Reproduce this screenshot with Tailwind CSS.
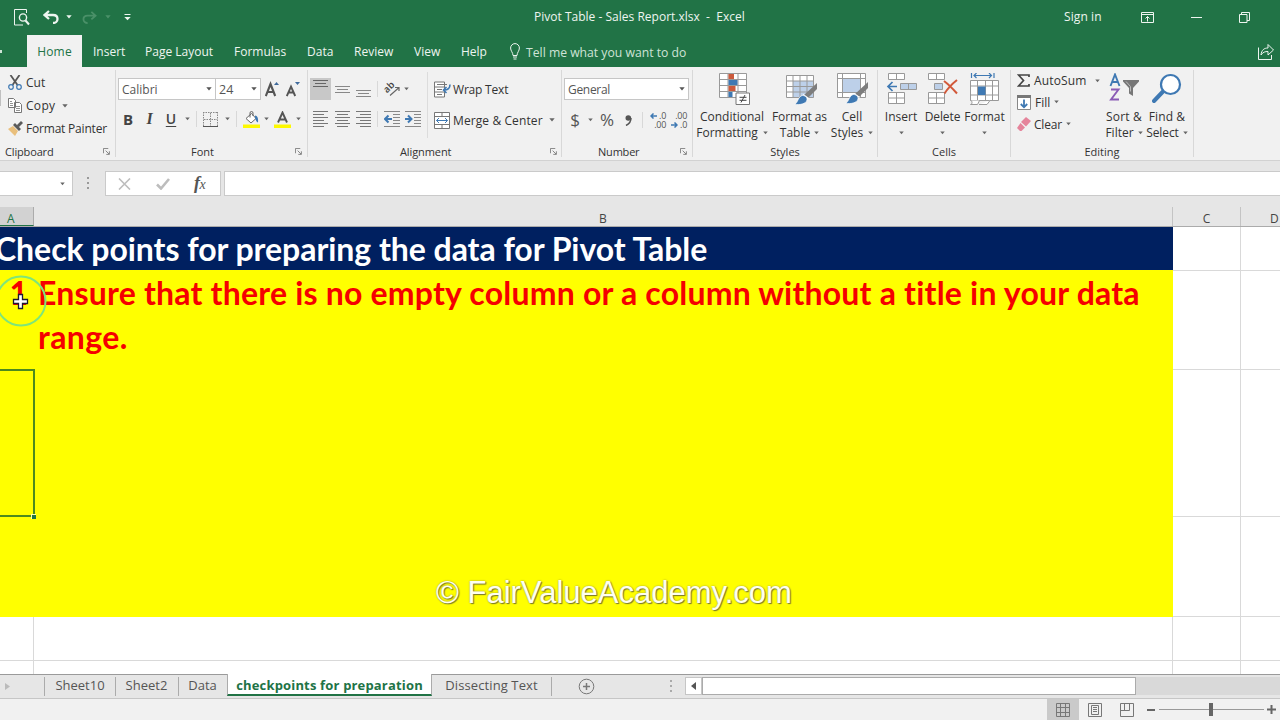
<!DOCTYPE html>
<html lang="en">
  <head>
    <meta charset="UTF-8" />
    <meta name="viewport" content="width=device-width, initial-scale=1.0" />
    <title>Pivot Table - Sales Report.xlsx - Excel</title>
    <script src="https://cdn.jsdelivr.net/npm/@tailwindcss/browser@4"></script>
  </head>
  <body class="w-[1280px] h-[720px] overflow-hidden bg-[#e6e6e6] font-['Open_Sans',sans-serif] text-[12px] leading-4 text-[#333] whitespace-nowrap">
    <!-- shared shapes -->
    <svg class="hidden">
      <symbol id="caret" viewBox="0 0 6 4"><path d="M0.3 0.3h5.4L3 3.4z" fill="currentColor" /></symbol>
      <symbol id="launcher" viewBox="0 0 8 8"><path d="M0.5 6V0.5H6M3 3l4 4M7.3 3.8v3.5H3.8" fill="none" stroke="#777" /></symbol>
      <symbol id="brush" viewBox="0 0 24 24">
        <path d="M23 1v6l-9 9-4-3z" fill="#7d7d7d" />
        <path d="M9 12.5l5.500 4" stroke="#fff" stroke-width="1.500" />
        <path d="M8.500 13.500c2.500 0 5 2 4.500 4.500C12 22 6 23 0.500 22.500 4 21 4 14 8.500 13.500z" fill="#3f79b3" stroke="#fff" stroke-width=".7" />
      </symbol>
    </svg>

    <header class="h-[67px] bg-[#217346] text-[#eef5f0]">
      <!-- Title bar -->
      <div class="flex h-[35px] items-center pb-px">
        <div class="flex w-[534px] items-center pl-[14px]">
          <svg class="w-[16px] h-[17px]" viewBox="0 0 16 17" fill="none" stroke="currentColor"><path d="M12.500 4V.5H.5v15.500H9" /><circle cx="9" cy="8.500" r="3.600" stroke-width="1.400" /><path d="M11.500 11.500l3.500 4" stroke-width="2" /></svg>
          <svg class="ml-[13px] w-[16px] h-[14px]" viewBox="0 0 16 14" fill="none" stroke="currentColor" stroke-width="2.300"><path d="M6 1L1.500 5 6 9M2 5h8c3 0 4.500 1.700 4.500 4S12.500 13 10 13" /></svg>
          <svg class="ml-[7px] w-[6px] h-[4px]"><use href="#caret" /></svg>
          <svg class="ml-[10px] w-[15px] h-[13px] text-[#4a9068]" viewBox="0 0 16 14" fill="none" stroke="currentColor" stroke-width="2"><path d="M10 1l4.500 4L10 9M14 5H6C3 5 1.500 6.700 1.500 9S3.500 13 6 13" /></svg>
          <svg class="ml-[8px] w-[6px] h-[4px] text-[#4a9068]"><use href="#caret" /></svg>
          <svg class="ml-[13px] w-[7px] h-[7px]" viewBox="0 0 7 7" fill="currentColor"><path d="M.5 0h6v1h-6zM.3 3h6.400L3.500 6.300z" /></svg>
        </div>
        <div class="w-[530px] tracking-[0.01px] whitespace-pre">Pivot Table - Sales Report.xlsx  -  Excel</div>
        <div class="w-[77px] tracking-[0.1px]">Sign in</div>
        <svg class="w-[13px] h-[11px]" viewBox="0 0 13 11" fill="none" stroke="currentColor"><path d="M.5.5h12v10H.5zM.5 2.500h12M6.500 9.500V4.500M4.500 6.500l2-2 2 2" /></svg>
        <div class="ml-[37px] h-px w-[11px] bg-[#eef5f0]"></div>
        <svg class="ml-[37px] w-[11px] h-[11px]" viewBox="0 0 11 11" fill="none" stroke="currentColor"><path d="M.5 2.500h7.500v8H.5zM2.500 2.500V.5h8v8H8" /></svg>
      </div>
      <!-- Ribbon tabs -->
      <nav class="flex h-[32px] items-center">
        <div class="w-[27px]"><span class="block h-[3px] w-[2px] bg-[#cfe3d7]"></span></div>
        <div class="flex h-[32px] w-[55px] items-center justify-center bg-[#f1f1f1] pt-[2px] tracking-[0.2px] text-[#217346]">Home</div>
        <div class="w-[63px] pt-[2px] pl-[11px]">Insert</div>
        <div class="w-[89px] pt-[2px]">Page Layout</div>
        <div class="w-[73px] pt-[2px]">Formulas</div>
        <div class="w-[47px] pt-[2px]">Data</div>
        <div class="w-[60px] pt-[2px]">Review</div>
        <div class="w-[47px] pt-[2px]">View</div>
        <div class="w-[49px] pt-[2px]">Help</div>
        <svg class="w-[10px] h-[17px]" viewBox="0 0 10 17" fill="none" stroke="currentColor"><path d="M3 12.500C3 9.500.6 8 .6 5a4.400 4.400 0 0 1 8.800 0c0 3-2.400 4.500-2.400 7.500zM3 14h4M3.500 16h3" /></svg>
        <div class="w-[737px] pt-[3px] pl-[6px] text-[12.2px] text-[#cfe3d7]">Tell me what you want to do</div>
        <svg class="w-[18px] h-[17px] shrink-0" viewBox="0 0 18 17" fill="none" stroke="currentColor"><path d="M1.500 4.500v12h13V12M4 12c.5-5 3-7 7-7V1.500L16.500 7 11 12V8.500c-3 0-5 .5-7 3.500z" /></svg>
      </nav>
    </header>

    <!-- Ribbon -->
    <section class="flex h-[94px] border-b border-[#d2d2d2] bg-[#f1f1f1] py-[3px]">
      <!-- Clipboard -->
      <div class="w-[116px] border-r border-[#d8d8d8]">
        <div class="flex h-[74px]">
          <div class="mt-[20px] h-[16px] w-px bg-[#c0c0c0]"></div>
          <div class="flex flex-col pt-[1px] pl-[7px]">
            <div class="flex h-[23px] items-center gap-[4px]">
              <svg class="w-[14px] h-[15px]" viewBox="0 0 14 15" fill="none"><path d="M2.500 0l7 10M11.500 0l-7 10" stroke="#555" stroke-width="1.800" /><circle cx="3" cy="12" r="2.300" stroke="#3f79b3" stroke-width="1.200" /><circle cx="11" cy="12" r="2.300" stroke="#3f79b3" stroke-width="1.200" /></svg>
              <span>Cut</span>
            </div>
            <div class="flex h-[23px] items-center gap-[4px]">
              <svg class="w-[14px] h-[15px]" viewBox="0 0 14 15" fill="#fff" stroke="#777"><path d="M.5.5h5l2 2v7h-7zM6.500 4.500h5l2 2v8h-7z" /><path d="M2 3.500h2M2 5.500h3M2 7.500h3M8 8.500h4M8 10.500h4M8 12.500h4" stroke-width=".8" /></svg>
              <span class="tracking-[0.3px]">Copy</span>
              <svg class="ml-[3px] w-[6px] h-[4px] text-[#666]"><use href="#caret" /></svg>
            </div>
            <div class="flex h-[23px] items-center gap-[2px]">
              <svg class="w-[16px] h-[15px]" viewBox="0 0 16 15"><path d="M0 8l5-3 5 5-3 5z" fill="#e9bf7c" /><path d="M5 4l2-2 6 6-2 2zM9 4l4-4 2 2-4 4z" fill="#5a5a5a" /></svg>
              <span class="tracking-[-0.2px]">Format Painter</span>
            </div>
          </div>
        </div>
        <div class="flex h-[15px] items-center justify-between pr-[5px] pl-[5px] text-[11px] tracking-[-0.15px]"><span>Clipboard</span><svg class="w-[7px] h-[7px]"><use href="#launcher" /></svg></div>
      </div>

      <!-- Font -->
      <div class="w-[192px] border-r border-[#d8d8d8]">
        <div class="h-[74px] pt-[8px]">
          <div class="flex h-[22px] items-center pl-[2px]">
            <div class="flex h-[22px] w-[98px] items-center justify-between border border-[#c6c6c6] bg-white px-[3px] text-[#555]"><span class="pt-[2px]">Calibri</span><svg class="w-[6px] h-[4px]"><use href="#caret" /></svg></div>
            <div class="-ml-px flex h-[22px] w-[46px] items-center justify-between border border-[#c6c6c6] bg-white px-[3px] text-[#555]"><span class="pt-[2px] text-[12.5px]">24</span><svg class="w-[6px] h-[4px]"><use href="#caret" /></svg></div>
            <svg class="ml-[4px] w-[15px] h-[16px]" viewBox="0 0 15 16"><path d="M.8 15L5.500 3 10.200 15M2.500 11h6" fill="none" stroke="#555" stroke-width="2.100" /><path d="M9 4l2.500-3L14 4z" fill="#3f6a9c" /></svg>
            <svg class="ml-[6px] w-[15px] h-[16px]" viewBox="0 0 15 16"><path d="M.8 15L5 5.500 9.200 15M2.500 11.500h5" fill="none" stroke="#555" stroke-width="1.900" /><path d="M9 1l2.500 3L14 1z" fill="#3f6a9c" /></svg>
          </div>
          <div class="mt-[9px] flex h-[20px] items-center text-[#444]">
            <div class="w-[23px] pl-[7px] text-[15px] font-bold">B</div>
            <div class="w-[21px] text-center font-['Liberation_Serif',serif] text-[16px] font-bold italic">I</div>
            <div class="w-[22px] text-center text-[14px] font-semibold underline underline-offset-2">U</div>
            <svg class="ml-[3px] w-[5px] h-[4px] text-[#666]"><use href="#caret" /></svg>
            <div class="ml-[6px] h-[16px] w-px bg-[#d8d8d8]"></div>
            <svg class="ml-[6px] w-[15px] h-[15px]" viewBox="0 0 15 15" fill="none" stroke="#888"><path d="M0 .5h15M.5 0v14M14.500 0v14M7.500 1v13M1 7.500h13" stroke-dasharray="1.500 1" /><path d="M0 14.500h15" stroke="#555" /></svg>
            <svg class="ml-[7px] w-[5px] h-[4px] text-[#666]"><use href="#caret" /></svg>
            <div class="ml-[6px] h-[16px] w-px bg-[#d8d8d8]"></div>
            <svg class="ml-[6px] w-[17px] h-[17px]" viewBox="0 0 17 17"><path d="M0 13.500h17V17H0z" fill="#fdf900" /><path d="M3 7.500L8.500 2.500 13 7.500 8 12z" fill="#fff" stroke="#666" /><path d="M7 6.500V2a1.500 1.500 0 0 1 3 0v3" fill="none" stroke="#666" /><path d="M12 4.500c2.500 0 3.500 3 3 7-2-.5-2-3-3-4.500z" fill="#3f79b3" /></svg>
            <svg class="ml-[4px] w-[5px] h-[4px] text-[#666]"><use href="#caret" /></svg>
            <svg class="ml-[5px] w-[17px] h-[17px]" viewBox="0 0 17 17"><path d="M0 13.500h17V17H0z" fill="#fdf900" /><path d="M4 11.500L8.500 1.500 13 11.500M5.500 8.500h6" fill="none" stroke="#555" stroke-width="1.900" /></svg>
            <svg class="ml-[5px] w-[5px] h-[4px] text-[#666]"><use href="#caret" /></svg>
          </div>
        </div>
        <div class="flex h-[15px] items-center justify-between pr-[5px] pl-[75px] text-[11px]"><span>Font</span><svg class="w-[7px] h-[7px]"><use href="#launcher" /></svg></div>
      </div>

      <!-- Alignment -->
      <div class="w-[254px] border-r border-[#d8d8d8]">
        <div class="flex h-[74px]">
          <div class="mt-[2px] h-[66px] w-[120px] border-r border-[#dcdcdc] pt-[6px] pl-[2px]">
            <div class="flex h-[22px] items-center">
              <div class="flex h-[22px] w-[21px] justify-center bg-[#c8c8c8]"><svg class="w-[15px] h-[10px]" viewBox="0 0 15 10" stroke="#666"><path d="M0 2.500h15M2 5.500h11M0 8.500h15" /></svg></div>
              <svg class="ml-[4px] w-[15px] h-[9px]" viewBox="0 0 15 9" stroke="#888"><path d="M0 1.500h15M2 4.500h11M0 7.500h15" /></svg>
              <svg class="mt-[8px] ml-[6px] w-[15px] h-[9px]" viewBox="0 0 15 9" stroke="#888"><path d="M0 1.500h15M2 4.500h11M0 7.500h15" /></svg>
              <div class="ml-[6px] h-[16px] w-px bg-[#d8d8d8]"></div>
              <svg class="ml-[7px] w-[15px] h-[14px] overflow-visible" viewBox="0 0 15 14"><text x="1" y="11" transform="rotate(-45 2 10)" font-size="9.500" fill="#444" font-weight="600">ab</text><path d="M5 13.500L13.500 6M10 5.500h4V9" fill="none" stroke="#666" stroke-width="1.200" /></svg>
              <svg class="ml-[4px] w-[5px] h-[4px] text-[#666]"><use href="#caret" /></svg>
            </div>
            <div class="mt-[10px] flex h-[18px] items-center pl-[3px]">
              <svg class="w-[15px] h-[16px]" viewBox="0 0 15 16" stroke="#777"><path d="M0 .5h15M0 3.500h11M0 6.500h15M0 9.500h11M0 12.500h15M0 15.500h11" /></svg>
              <svg class="ml-[7px] w-[15px] h-[16px]" viewBox="0 0 15 16" stroke="#777"><path d="M0 .5h15M2 3.500h11M0 6.500h15M2 9.500h11M0 12.500h15M2 15.500h11" /></svg>
              <svg class="ml-[6px] w-[15px] h-[16px]" viewBox="0 0 15 16" stroke="#777"><path d="M0 .5h15M4 3.500h11M0 6.500h15M4 9.500h11M0 12.500h15M4 15.500h11" /></svg>
              <div class="ml-[6px] h-[16px] w-px bg-[#d8d8d8]"></div>
              <svg class="ml-[6px] w-[16px] h-[16px]" viewBox="0 0 16 16" fill="none" stroke="#888"><path d="M0 .5h16M9 3.500h7M9 6.500h7M9 9.500h7M9 12.500h7M0 15.500h16" /><path d="M8 8H1M4.500 4.500L1 8l3.500 3.500" stroke="#3f79b3" stroke-width="2" /></svg>
              <svg class="ml-[5px] w-[16px] h-[16px]" viewBox="0 0 16 16" fill="none" stroke="#888"><path d="M0 .5h16M9 3.500h7M9 6.500h7M9 9.500h7M9 12.500h7M0 15.500h16" /><path d="M0 8h6M3 4.500L6.500 8 3 11.500" stroke="#3f79b3" stroke-width="2" /></svg>
            </div>
          </div>
          <div class="pt-[8px] pl-[6px]">
            <div class="flex h-[22px] items-center gap-[2px]">
              <svg class="w-[17px] h-[17px]" viewBox="0 0 17 17" fill="#fff" stroke="#777"><path d="M.5 1h10v15H.5zM.5 6h10M.5 11h10" /><path d="M3 3.500h10M3 8.500h5M3 13.500h5" /><path d="M16 3.500c0 4-2 5.500-6 5.500M12.500 6l-3 3 3 3" fill="none" stroke="#3f79b3" stroke-width="1.600" /></svg>
              <span class="pt-[2px] tracking-[-0.2px]">Wrap Text</span>
            </div>
            <div class="mt-[9px] flex h-[22px] items-center gap-[3px]">
              <svg class="w-[16px] h-[17px]" viewBox="0 0 16 17" fill="#fff" stroke="#777"><path d="M.5.5h15v16H.5zM.5 4.500h15M.5 12.500h15M8 .5v4M8 12.500v4" /><path d="M2.500 8.500h11M5 6L2.500 8.500 5 11M11 6l2.500 2.500L11 11" fill="none" stroke="#3f79b3" /></svg>
              <span class="pt-[2px] tracking-[0.1px]">Merge &amp; Center</span>
              <svg class="ml-[3px] w-[6px] h-[4px] text-[#666]"><use href="#caret" /></svg>
            </div>
          </div>
        </div>
        <div class="flex h-[15px] items-center justify-between pr-[4px] pl-[92px] text-[11px]"><span class="tracking-[-0.1px]">Alignment</span><svg class="w-[7px] h-[7px]"><use href="#launcher" /></svg></div>
      </div>

      <!-- Number -->
      <div class="w-[131px] border-r border-[#d8d8d8]">
        <div class="h-[74px] pt-[8px] pl-[2px]">
          <div class="flex h-[22px] w-[125px] items-center justify-between border border-[#c6c6c6] bg-white px-[3px] text-[#555]"><span class="pt-[2px] tracking-[-0.3px]">General</span><svg class="w-[6px] h-[4px]"><use href="#caret" /></svg></div>
          <div class="mt-[10px] flex h-[20px] items-center text-[#555]">
            <div class="w-[22px] text-center text-[17px]">$</div>
            <svg class="ml-[2px] w-[5px] h-[4px] text-[#666]"><use href="#caret" /></svg>
            <div class="ml-[4px] w-[20px] text-center text-[17px]">%</div>
            <svg class="ml-[8px] w-[7px] h-[11px]" viewBox="0 0 7 11"><circle cx="3.300" cy="3" r="2.800" fill="#555" /><path d="M6 3c0 4-2 6-5 7.500" fill="none" stroke="#555" stroke-width="1.500" /></svg>
            <div class="ml-[10px] h-[16px] w-px bg-[#d8d8d8]"></div>
            <div class="ml-[7px] w-[16px] text-right text-[9px] leading-[9px] tracking-[-0.3px]">
              <div class="flex items-center justify-between"><svg class="w-[7px] h-[6px]" viewBox="0 0 7 6"><path d="M7 3H1M3.500.5L1 3l2.500 2.500" fill="none" stroke="#3f79b3" stroke-width="1.500" /></svg>.0</div>
              <div>.00</div>
            </div>
            <div class="ml-[5px] w-[16px] text-right text-[9px] leading-[9px] tracking-[-0.3px]">
              <div>.00</div>
              <div class="flex items-center justify-between"><svg class="w-[7px] h-[6px]" viewBox="0 0 7 6"><path d="M0 3h6M3.500.5L6 3 3.500 5.500" fill="none" stroke="#3f79b3" stroke-width="1.500" /></svg>.0</div>
            </div>
          </div>
        </div>
        <div class="flex h-[15px] items-center justify-between pr-[5px] pl-[36px] text-[11px]"><span class="tracking-[-0.2px]">Number</span><svg class="w-[7px] h-[7px]"><use href="#launcher" /></svg></div>
      </div>

      <!-- Styles -->
      <div class="w-[185px] border-r border-[#d8d8d8]">
        <div class="flex h-[74px] pt-[3px] text-center">
          <div class="flex w-[78px] flex-col items-center">
            <svg class="mb-px h-[35px] w-[32px] translate-x-[3px]" viewBox="0 0 32 35"><path d="M.5.5h27v24H.5z" fill="#fff" /><path d="M.5.5h27v24H.5zM.5 6.500h27M.5 12.500h27M.5 18.500h27M9 .5v24M19 .5v24" fill="none" stroke="#999" /><path d="M9.500 1h5.500v5H9.500zM9.500 13h7v5h-7z" fill="#cc5a3c" /><path d="M9.500 7h9v5h-9zM9.500 19h4v5h-4z" fill="#3f79b3" /><path d="M17 20h13.500v11.500H17z" fill="#fff" stroke="#777" /><path d="M20.500 24.300h7M20.500 27.300h7M26 22l-4 7.500" stroke="#444" /></svg>
            <span>Conditional</span>
            <span class="flex items-center gap-[5px]">Formatting<svg class="w-[5px] h-[4px] text-[#666]"><use href="#caret" /></svg></span>
          </div>
          <div class="flex w-[57px] flex-col items-center">
            <svg class="mb-px h-[35px] w-[32px] translate-x-[2px]" viewBox="0 0 32 35"><path d="M.5 2.500h27v22H.5z" fill="#fff" /><path d="M7 8h20.500v16.500H7z" fill="#bdd0e9" /><path d="M.5 2.500h27v22H.5zM.5 8h27M.5 13.500h27M.5 19h27M7 2.500v22M14 2.500v22M21 2.500v22" fill="none" stroke="#999" /><use href="#brush" x="8" y="9" width="24" height="24" /></svg>
            <span class="tracking-[-0.1px]">Format as</span>
            <span class="flex items-center gap-[4px]">Table<svg class="w-[5px] h-[4px] text-[#666]"><use href="#caret" /></svg></span>
          </div>
          <div class="flex w-[48px] flex-col items-center">
            <svg class="mb-px h-[35px] w-[32px] translate-x-[1px]" viewBox="0 0 32 35"><path d="M.5.5h28v24H.5z" fill="#fff" stroke="#999" /><path d="M6 6h17v13H6z" fill="#bdd0e9" /><path d="M.5 5.500h28M.5 19.500h28M5.500.5v24M23.500.5v24" fill="none" stroke="#999" /><use href="#brush" x="8" y="8" width="24" height="24" /></svg>
            <span>Cell</span>
            <span class="flex items-center gap-[5px]">Styles<svg class="w-[5px] h-[4px] text-[#666]"><use href="#caret" /></svg></span>
          </div>
        </div>
        <div class="h-[15px] text-center text-[11px]">Styles</div>
      </div>

      <!-- Cells -->
      <div class="w-[133px] border-r border-[#d8d8d8]">
        <div class="flex h-[74px] pt-[3px] pl-[2px] text-center">
          <div class="flex w-[42px] flex-col items-center">
            <svg class="mb-px h-[35px] w-[31px]" viewBox="0 0 31 35" fill="#fff" stroke="#999"><path d="M2.500.5h16v6h-16zM10.500.5v6M2.500 19.500h16v11h-16zM2.500 25h16M10.500 19.500v11" /><path d="M14.500 10.500h16v6h-16zM22.500 10.500v6" fill="#bdd0e9" /><path d="M11 13.500H2M6.500 9L2 13.500 6.500 18" fill="none" stroke="#3f79b3" stroke-width="1.700" /></svg>
            <span>Insert</span>
            <svg class="mt-[6px] w-[5px] h-[4px] text-[#666]"><use href="#caret" /></svg>
          </div>
          <div class="flex w-[41px] flex-col items-center">
            <svg class="mb-px h-[35px] w-[31px]" viewBox="0 0 31 35" fill="#fff" stroke="#999"><path d="M1.500.5h16v6h-16zM9.500.5v6M1.500 19.500h16v11h-16zM1.500 25h16M9.500 19.500v11" /><path d="M7.500 10.500h8v6h-8z" fill="#bdd0e9" /><path d="M17 8c4 3 9 8 13 12.500M30 7c-5 4-9 8-12.500 13.500" fill="none" stroke="#d2593a" stroke-width="2" /></svg>
            <span class="tracking-[-0.1px]">Delete</span>
            <svg class="mt-[6px] w-[5px] h-[4px] text-[#666]"><use href="#caret" /></svg>
          </div>
          <div class="flex w-[43px] flex-col items-center">
            <svg class="mb-px h-[35px] w-[30px]" viewBox="0 0 30 35" fill="#fff" stroke="#999"><path d="M.5 7.500h28v20H.5z" /><path d="M.5 13h28M.5 22h28M7.500 7.500v20M15.500 7.500v20M22.500 7.500v20" /><path d="M.5 27.500c2 0 2 4 0 4h7l2-4M9 31.500h8l3-4" /><path d="M8 13.500h7.500v8.500H8z" fill="#3f79b3" stroke="none" /><path d="M1.500 0v5M24 0v5M4 2.500h17.500M6.500 0L4 2.500 6.500 5M19 0l2.500 2.500L19 5" fill="none" stroke="#3f79b3" stroke-width="1.200" /></svg>
            <span>Format</span>
            <svg class="mt-[6px] w-[5px] h-[4px] text-[#666]"><use href="#caret" /></svg>
          </div>
        </div>
        <div class="h-[15px] text-center text-[11px]">Cells</div>
      </div>

      <!-- Editing -->
      <div class="w-[183px] border-r border-[#d8d8d8]">
        <div class="flex h-[74px] pl-[6px]">
          <div class="w-[84px]">
            <div class="flex h-[21px] items-center gap-[4px]">
              <svg class="w-[13px] h-[13px]" viewBox="0 0 13 13"><path d="M12 3V1H1.500l5 5.500-5 5.500H12v-2" fill="none" stroke="#444" stroke-width="1.700" /></svg>
              <span class="tracking-[0.15px]">AutoSum</span>
              <svg class="ml-[4px] w-[5px] h-[4px] text-[#666]"><use href="#caret" /></svg>
            </div>
            <div class="flex h-[22px] items-center gap-[4px]">
              <svg class="w-[14px] h-[15px]" viewBox="0 0 14 15"><path d="M.5.5h13v14H.5z" fill="#fff" stroke="#888" /><path d="M0 0h14v3H0z" fill="#777" /><path d="M7 4.500v8M3.800 9L7 12.300 10.200 9" fill="none" stroke="#3f79b3" stroke-width="1.800" /></svg>
              <span class="pt-px">Fill</span>
              <svg class="w-[5px] h-[4px] text-[#666]"><use href="#caret" /></svg>
            </div>
            <div class="flex h-[22px] items-center gap-[3px]">
              <svg class="w-[14px] h-[14px]" viewBox="0 0 14 14"><path d="M9 0l5 4-5 5.500-5-4.500z" fill="#e5849b" /><path d="M3.500 6l4.500 4.500-3.500 3.500H3L0 11z" fill="#e5849b" /></svg>
              <span class="pt-[2px] tracking-[-0.2px]">Clear</span>
              <svg class="ml-[1px] w-[5px] h-[4px] text-[#666]"><use href="#caret" /></svg>
            </div>
          </div>
          <div class="flex w-[46px] flex-col items-center pt-[3px]">
            <svg class="mb-px h-[35px] w-[30px]" viewBox="0 0 30 35" fill="none" stroke-width="1.900"><path d="M1.500 13L6 1.500 10.500 13M3 9h6" stroke="#3f79b3" /><path d="M2 16.500h7.500L2 26.500h8" stroke="#8a5bb5" /><path d="M14 7h16v1.500l-6 6.500v8l-4-2.500V15l-6-6.500z" fill="#777" /><path d="M17 8.500l4.500 5v5" stroke="#bbb" stroke-width="1" /></svg>
            <span class="tracking-[0.2px]">Sort &amp;</span>
            <span class="flex items-center gap-[4px]">Filter<svg class="w-[5px] h-[4px] text-[#666]"><use href="#caret" /></svg></span>
          </div>
          <div class="flex w-[40px] flex-col items-center pt-[3px]">
            <svg class="mb-px h-[35px] w-[30px]" viewBox="0 0 30 35"><path d="M11.500 18L2 28" stroke="#3f79b3" stroke-width="4" stroke-linecap="round" /><circle cx="18.500" cy="11.500" r="9.500" fill="#fff" stroke="#3f79b3" stroke-width="2.200" /></svg>
            <span class="tracking-[0.1px]">Find &amp;</span>
            <span class="flex items-center gap-[4px] tracking-[-0.1px]">Select<svg class="w-[5px] h-[4px] text-[#666]"><use href="#caret" /></svg></span>
          </div>
        </div>
        <div class="h-[15px] text-center text-[11px]">Editing</div>
      </div>
    </section>

    <!-- Formula bar -->
    <section class="flex h-[46px] items-start pt-[10px]">
      <div class="flex h-[25px] w-[73px] items-center justify-end border border-l-0 border-[#cacaca] bg-white pr-[7px] text-[#666]"><svg class="w-[5px] h-[4px]"><use href="#caret" /></svg></div>
      <svg class="mt-[6px] ml-[14px] w-[3px] h-[12px]" viewBox="0 0 3 12" fill="#999"><path d="M0 0h2v2H0zM0 5h2v2H0zM0 10h2v2H0z" /></svg>
      <div class="ml-[15px] flex h-[25px] w-[116px] items-center border border-[#cacaca] bg-white">
        <svg class="ml-[12px] w-[13px] h-[12px]" viewBox="0 0 13 12" stroke="#bdbdbd" stroke-width="1.600"><path d="M1 .5l11 11M12 .5L1 11.500" /></svg>
        <svg class="ml-[25px] w-[14px] h-[12px]" viewBox="0 0 14 12" fill="none" stroke="#bdbdbd" stroke-width="2.600"><path d="M1 6.500l4 4L13 1" /></svg>
        <div class="ml-[24px] font-['Liberation_Serif',serif] text-[18px] leading-4 font-bold tracking-[-0.5px] text-[#555] italic">f<span class="text-[14px] font-normal">x</span></div>
      </div>
      <div class="ml-[3px] h-[25px] flex-1 border border-r-0 border-[#cacaca] bg-white"></div>
    </section>

    <!-- Column letters -->
    <div class="flex h-[20px] border-b border-[#ababab] leading-[23px] text-[#444]">
      <div class="w-[34px] border-r border-b border-r-[#ababab] border-b-[#217346] bg-[#d2d2d2] pl-[7px] text-[#217346]">A</div>
      <div class="w-[1139px] border-r border-[#c4c4c4] text-center">B</div>
      <div class="w-[68px] border-r border-[#c4c4c4] text-center">C</div>
      <div class="pl-[29px]">D</div>
    </div>

    <!-- Cells -->
    <main class="relative grid h-[447px] grid-cols-[34px_1139px_68px_39px] grid-rows-[43px_100px_147px_100px_44px_13px] overflow-hidden bg-white font-[Lato,sans-serif] text-[32px] leading-[44px] font-bold text-[#f50000]">
      <div class="col-span-2 bg-[#002060] text-white"><span class="-ml-[5px] inline-block tracking-[-0.05px]">Check points for preparing the data for Pivot Table</span></div>
      <div class="-mb-px border-r border-b border-[#d9d9d9]"></div>
      <div class="-mb-px border-b border-[#d9d9d9]"></div>

      <div class="bg-[#ffff00] pt-[1px] pr-[6px] text-right">1</div>
      <div class="bg-[#ffff00] pt-[1px] pl-[4px] tracking-[0.2px]">
        <div>Ensure that there is no empty column or a column without a title in your data</div>
        <div class="tracking-[0.4px]">range.</div>
      </div>
      <div class="border-r border-b border-[#d9d9d9]"></div>
      <div class="border-b border-[#d9d9d9]"></div>

      <!-- selected cell with its fill handle -->
      <div class="relative bg-[#ffff00]">
        <div class="absolute -top-[1px] right-[-1px] bottom-0 left-[-3px] border-2 border-[#4d8a1e]"></div>
        <div class="absolute right-[-2px] -bottom-[2px] h-[5px] w-[5px] border-t border-l border-[#ffffb0] bg-[#217346]"></div>
      </div>
      <div class="bg-[#ffff00]"></div>
      <div class="border-r border-b border-[#d9d9d9]"></div>
      <div class="border-b border-[#d9d9d9]"></div>

      <div class="col-span-2 bg-[#ffff00]"></div>
      <div class="border-r border-b border-[#d9d9d9]"></div>
      <div class="border-b border-[#d9d9d9]"></div>

      <div class="border-r border-b border-[#d9d9d9]"></div>
      <div class="border-r border-b border-[#d9d9d9]"></div>
      <div class="border-r border-b border-[#d9d9d9]"></div>
      <div class="border-b border-[#d9d9d9]"></div>

      <div class="border-r border-[#d9d9d9]"></div>
      <div class="border-r border-[#d9d9d9]"></div>
      <div class="border-r border-[#d9d9d9]"></div>
      <div></div>

      <!-- mouse pointer and its highlight ring -->
      <svg class="absolute -left-[5px] top-[48px] h-[52px] w-[52px]" viewBox="0 0 52 52"><circle cx="26" cy="26" r="24.500" fill="none" stroke="#7fe57a" stroke-width="2" /><path d="M23.500 19.500h4v5h5v4h-5v5h-4v-5h-5v-4h5z" fill="#fff" stroke="#1a1a33" stroke-width="1.300" /></svg>
      <div class="absolute top-[344px] left-[436px] font-['Liberation_Sans',sans-serif] text-[31px] font-normal text-[#fffff0] [text-shadow:1px_1px_1px_#77772a,0_0_2px_#99993a]">© FairValueAcademy.com</div>
    </main>

    <!-- Sheet tabs -->
    <section class="flex h-[25px] border-t border-b border-t-[#9a9a9a] border-b-[#c6c6c6] text-[13px] leading-[21px] text-[#555]">
      <div class="w-[44px] pt-[8px] pl-[5px]"><svg class="w-[5px] h-[7px]" viewBox="0 0 5 7"><path d="M0 0l5 3.500L0 7z" fill="#bbb" /></svg></div>
      <div class="my-[2px] w-[71px] border-l border-[#ababab] text-center leading-[17px]">Sheet10</div>
      <div class="my-[2px] w-[63px] border-l border-[#ababab] pr-px text-center leading-[17px]">Sheet2</div>
      <div class="my-[2px] w-[49px] border-l border-[#ababab] pr-px text-center leading-[17px]">Data</div>
      <div class="-mt-px h-[22px] w-[205px] border-r border-b-2 border-l border-r-[#ababab] border-b-[#217346] border-l-[#ababab] bg-white text-center leading-[22px] font-bold tracking-[0.17px] text-[#217346]">checkpoints for preparation</div>
      <div class="my-[2px] w-[120px] border-r border-[#ababab] text-center leading-[17px] tracking-[0.1px]">Dissecting Text</div>
      <svg class="mt-[3px] ml-[26px] w-[17px] h-[17px]" viewBox="0 0 17 17" fill="none" stroke="#777"><circle cx="8.500" cy="8.500" r="7.300" /><path d="M8.500 5v7M5 8.500h7" stroke-width="1.500" /></svg>
      <svg class="mt-[5px] ml-[75px] w-[3px] h-[12px]" viewBox="0 0 3 12" fill="#aaa"><path d="M0 0h2v2H0zM0 5h2v2H0zM0 10h2v2H0z" /></svg>
      <div class="mt-[2px] ml-[12px] flex h-[18px] w-[17px] items-center justify-center border border-[#c6c6c6] bg-white"><svg class="w-[5px] h-[8px]" viewBox="0 0 5 8"><path d="M5 0L0 4l5 4z" fill="#555" /></svg></div>
      <div class="mt-[2px] h-[18px] w-[434px] border border-[#ababab] bg-white"></div>
      <div class="mt-[2px] h-[18px] flex-1 bg-[#d9d9d9]"></div>
    </section>

    <!-- Status bar -->
    <footer class="flex h-[21px] items-center bg-[#f1f1f1] pl-[1047px]">
      <div class="flex h-[21px] w-[32px] items-center justify-center bg-[#cacaca]"><svg class="w-[14px] h-[14px]" viewBox="0 0 14 14" fill="none" stroke="#777"><path d="M.5.5h13v13H.5zM.5 4.500h13M.5 9.500h13M4.500.5v13M9.500.5v13" /></svg></div>
      <svg class="ml-[9px] w-[14px] h-[14px] shrink-0" viewBox="0 0 14 14" fill="none" stroke="#777"><path d="M.5.5h13v13H.5zM3.500 2.500h7v9h-7zM5 4.500h4M5 6.500h4M5 8.500h4" /></svg>
      <svg class="ml-[18px] w-[14px] h-[14px] shrink-0" viewBox="0 0 14 14" fill="none" stroke="#777"><path d="M.5.5h13v13H.5zM4.500.5v7M9.500.5v7M.5 7.500h9" /></svg>
      <div class="ml-[13px] h-[2px] w-[8px] shrink-0 bg-[#666]"></div>
      <svg class="ml-[4px] w-[105px] h-[13px] shrink-0" viewBox="0 0 105 13"><path d="M0 6.500h105" stroke="#999" /><path d="M50 0h4v13h-4z" fill="#666" /></svg>
      <svg class="ml-[3px] w-[9px] h-[9px] shrink-0" viewBox="0 0 9 9"><path d="M0 4.500h9M4.500 0v9" stroke="#666" stroke-width="2" /></svg>
    </footer>
  </body>
</html>
